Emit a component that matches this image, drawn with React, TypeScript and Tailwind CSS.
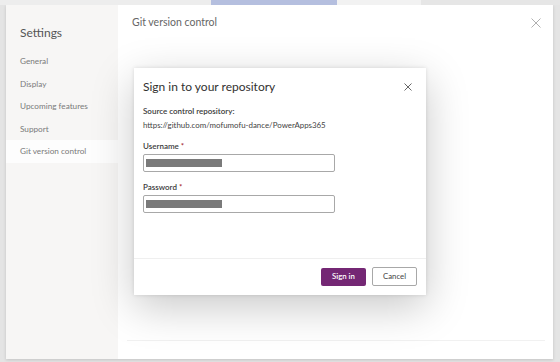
import React from "react";

const font = { fontFamily: 'Lato, "Noto Sans", sans-serif' };

export default function App() {
  const items = ["General", "Display", "Upcoming features", "Support", "Git version control"];
  return (
    <div className="relative w-[560px] h-[362px] overflow-hidden bg-[#e4e4e4]" style={font}>
      <div className="flex h-[5px]">
        <div className="w-[211px] bg-[#ededed]" />
        <div className="w-[126px] bg-[#b5bfdf]" />
        <div className="w-[84px] bg-[#f2f2f2]" />
        <div className="flex-1 bg-[#e6e6e6]" />
      </div>
      <div className="ml-[6px] w-[547px] h-[354px] flex bg-white shadow-[0_1px_3px_rgba(0,0,0,0.15)]">
        <div className="w-[112px] bg-[#f7f6f5] flex flex-col">
          <div className="pl-[14px] pt-[19px] h-[45px] text-[12px] leading-[18px] text-[#555]">Settings</div>
          <div className="flex flex-col">
            {items.map((it, i) => (
              <div
                key={it}
                className={`h-[22.5px] flex items-center pl-[14px] text-[8.2px] text-[#7a7a7a] ${i === 4 ? "bg-[#fdfdfd]" : ""}`}
              >
                {it}
              </div>
            ))}
          </div>
        </div>
        <div className="flex-1 flex flex-col px-[14px]">
          <div className="flex items-center justify-between h-[35px] pt-[1px]">
            <div className="text-[10.5px] text-[#666]">Git version control</div>
            <svg width="10" height="10" viewBox="0 0 10 10" className="mr-[-2px]">
              <path d="M0.5 0.5L9.5 9.5M9.5 0.5L0.5 9.5" stroke="#b0b0b0" strokeWidth="1" />
            </svg>
          </div>
          <div className="flex-1" />
          <div className="h-[1px] bg-[#f1f1f1] mb-[18px] ml-[-5px] mr-[-6px]" />
        </div>
      </div>

      <div className="absolute left-[134px] top-[68px] w-[292px] h-[227px] bg-white shadow-[0_12px_40px_rgba(0,0,0,0.22),0_0_4px_rgba(0,0,0,0.12)] flex flex-col">
        <div className="flex items-center justify-between pl-[9px] pr-[14px] pt-[1px] h-[37px]">
          <div className="text-[12px] text-[#323130]">Sign in to your repository</div>
          <svg width="8" height="8" viewBox="0 0 8 8">
            <path d="M0.5 0.5L7.5 7.5M7.5 0.5L0.5 7.5" stroke="#666" strokeWidth="1" />
          </svg>
        </div>
        <div className="px-[9px] pt-[0px] flex flex-col">
          <div className="text-[8px] font-semibold text-[#3a3a3a] leading-[12px]">Source control repository:</div>
          <div className="text-[7.9px] text-[#444] leading-[12px] mt-[2px]">https://github.com/mofumofu-dance/PowerApps365</div>
          <div className="text-[8px] font-semibold text-[#3a3a3a] leading-[12px] mt-[9px]">
            Username <span className="text-[#a4262c]">*</span>
          </div>
          <div className="mt-[2px] w-[192px] h-[18px] border border-[#a8a8a8] rounded-[2px] flex items-center pl-[2px]">
            <div className="w-[76px] h-[8px] bg-[#7a7a7a]" />
          </div>
          <div className="text-[8px] font-semibold text-[#3a3a3a] leading-[12px] mt-[9px]">
            Password <span className="text-[#a4262c]">*</span>
          </div>
          <div className="mt-[2px] w-[192px] h-[18px] border border-[#a8a8a8] rounded-[2px] flex items-center pl-[2px]">
            <div className="w-[76px] h-[8px] bg-[#7a7a7a]" />
          </div>
        </div>
        <div className="flex-1" />
        <div className="h-[1px] bg-[#efefef]" />
        <div className="flex justify-end gap-[6px] pr-[9px] pt-[9px] pb-[9px]">
          <div className="w-[45px] h-[18px] bg-[#742774] rounded-[2px] flex items-center justify-center text-[7.8px] font-semibold text-white">
            Sign in
          </div>
          <div className="w-[45px] h-[19px] border border-[#a8a8a8] rounded-[2px] flex items-center justify-center text-[7.8px] text-[#444] bg-white mt-[-0.5px]">
            Cancel
          </div>
        </div>
      </div>
    </div>
  );
}
